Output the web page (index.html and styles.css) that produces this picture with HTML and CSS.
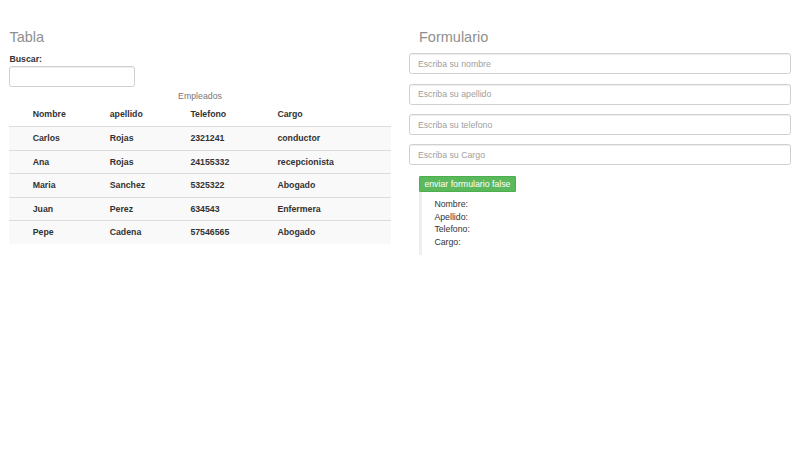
FILE: index.html
```html
<!DOCTYPE html>
<html lang="es">
<head>
<meta charset="utf-8">
<title>Tabla y Formulario</title>
<link rel="stylesheet" href="styles.css">
</head>
<body>
<div class="row">
  <div class="col">
    <h3 class="title">Tabla</h3>
    <label class="search-label" for="buscar">Buscar:</label>
    <input class="control search" id="buscar" type="text">
    <table class="table">
      <caption>Empleados</caption>
      <colgroup>
        <col class="c0"><col class="c1"><col class="c2"><col class="c3"><col>
      </colgroup>
      <thead>
        <tr><th></th><th>Nombre</th><th>apellido</th><th>Telefono</th><th>Cargo</th></tr>
      </thead>
      <tbody>
        <tr><td></td><td>Carlos</td><td>Rojas</td><td>2321241</td><td>conductor</td></tr>
        <tr><td></td><td>Ana</td><td>Rojas</td><td>24155332</td><td>recepcionista</td></tr>
        <tr><td></td><td>Maria</td><td>Sanchez</td><td>5325322</td><td>Abogado</td></tr>
        <tr><td></td><td>Juan</td><td>Perez</td><td>634543</td><td>Enfermera</td></tr>
        <tr><td></td><td>Pepe</td><td>Cadena</td><td>57546565</td><td>Abogado</td></tr>
      </tbody>
    </table>
  </div>
  <div class="col">
    <h3 class="title title-indent">Formulario</h3>
    <div class="form-group"><input class="control" type="text" placeholder="Escriba su nombre"></div>
    <div class="form-group"><input class="control" type="text" placeholder="Escriba su apellido"></div>
    <div class="form-group"><input class="control" type="text" placeholder="Escriba su telefono"></div>
    <div class="form-group"><input class="control" type="text" placeholder="Escriba su Cargo"></div>
    <div class="result">
      <button class="btn" type="button">enviar formulario false</button>
      <blockquote class="output">
        <div>Nombre:</div>
        <div>Apellido:</div>
        <div>Telefono:</div>
        <div>Cargo:</div>
      </blockquote>
    </div>
  </div>
</div>
</body>
</html>
```

FILE: styles.css
```css
* { box-sizing: border-box; }

body {
  margin: 0;
  font-family: "Liberation Sans", Arial, sans-serif;
  font-size: 8.75px;
  line-height: 12.5px;
  color: #333;
  background: #fff;
}

.row {
  display: flex;
}

.col {
  flex: 0 0 50%;
  padding: 0 9.4px;
}

.title {
  margin: 29px 0 8.3px;
  font-size: 14.5px;
  line-height: 16px;
  font-weight: normal;
  color: #8f8f8f;
}

.title-indent {
  padding-left: 9.6px;
}

.search-label {
  display: block;
  font-weight: bold;
}

.control {
  display: block;
  width: 100%;
  height: 21px;
  padding: 0 7.5px;
  font-family: inherit;
  font-size: 8.75px;
  color: #555;
  background: #fff;
  border: 1px solid #d0d0d0;
  border-radius: 2.5px;
  box-shadow: inset 0 1px 1px rgba(0, 0, 0, 0.075);
  outline: none;
}

.control::placeholder {
  color: #a0a0a0;
}

.search {
  width: 125.5px;
}

.table {
  width: 100%;
  table-layout: fixed;
  border-collapse: separate;
  border-spacing: 0;
}

.table caption {
  padding: 3.5px 0 0;
  color: #777;
  text-align: center;
}

.c0 { width: 18.3px; }
.c1 { width: 77px; }
.c2 { width: 80.7px; }
.c3 { width: 87px; }

.table th,
.table td {
  padding: 5px;
  text-align: left;
  font-weight: bold;
  vertical-align: top;
}

.table th {
  padding-bottom: 6px;
}

.table td {
  border-top: 1px solid #dcdcdc;
  background: #f9f9f9;
}

.form-group {
  margin-bottom: 9.4px;
}

.result {
  display: flex;
  flex-direction: column;
  align-items: flex-start;
  padding-left: 9.6px;
  padding-top: 1.4px;
}

.btn {
  margin: 0;
  padding: 0.6px 4.4px;
  font-family: inherit;
  font-size: 8.75px;
  line-height: 12.5px;
  color: #fff;
  background: #5cb85c;
  border: 0.75px solid #4cae4c;
  border-radius: 1px;
}

.output {
  margin: 0;
  padding: 6.5px 0 6.25px 12.4px;
  border-left: 3px solid #eee;
}
```
